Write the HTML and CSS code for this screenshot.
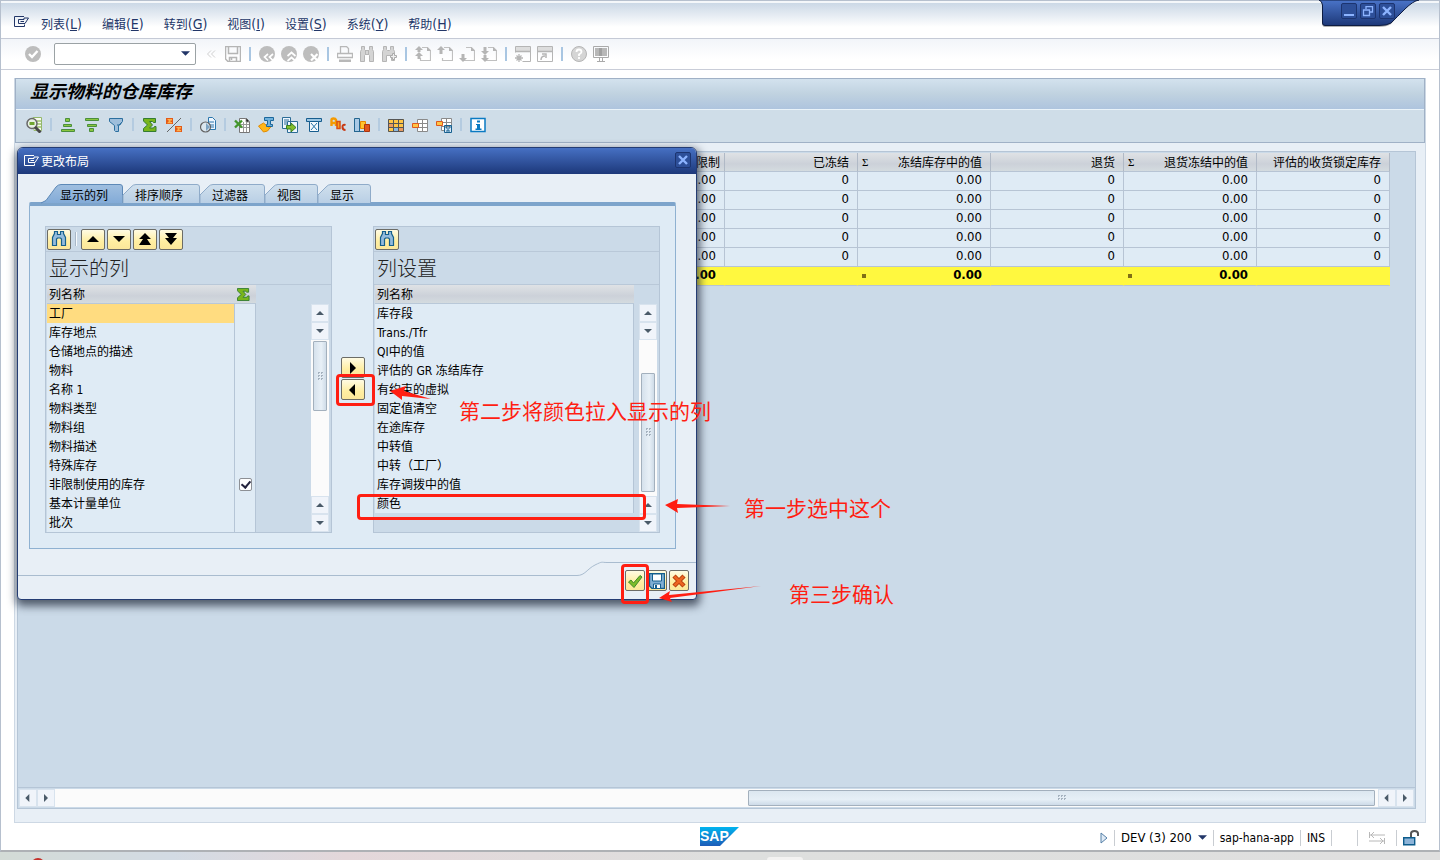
FILE: index.html
```html
<!DOCTYPE html>
<html lang="zh-CN">
<head>
<meta charset="utf-8">
<title>显示物料的仓库库存</title>
<link rel="stylesheet" href="styles.css">
</head>
<body>
<svg class="sprite" aria-hidden="true">
  <defs>
    <linearGradient id="g-blue" x1="0" y1="0" x2="0" y2="1"><stop offset="0" stop-color="#4a74c9"/><stop offset="1" stop-color="#1d3878"/></linearGradient>
    <linearGradient id="g-sap" x1="0" y1="0" x2="0" y2="1"><stop offset="0" stop-color="#00b4ef"/><stop offset="1" stop-color="#1d5cb8"/></linearGradient>
    <linearGradient id="g-tab" x1="0" y1="0" x2="0" y2="1"><stop offset="0" stop-color="#d0e0ed"/><stop offset="1" stop-color="#b9cfe5"/></linearGradient>
    <linearGradient id="g-tab-on" x1="0" y1="0" x2="0" y2="1"><stop offset="0" stop-color="#a0bfe0"/><stop offset="1" stop-color="#83abd7"/></linearGradient>
  </defs>
  <symbol id="i-exit" viewBox="0 0 16 14"><path d="M10 1.500H.5v10h10V9.500M4.500 4.500H10V3l4.500 0L11 8.500H4.500zM6.500 6.500H10" fill="none" stroke="currentColor" stroke-width="1"/></symbol>
  <symbol id="i-ok" viewBox="0 0 16 16"><circle cx="8" cy="8" r="8" fill="#bdbdbd"/><path d="M4 8l3 3 5.500-6" fill="none" stroke="#fff" stroke-width="2.400"/></symbol>
  <symbol id="i-back2" viewBox="0 0 16 16"><path d="M8 4.500L4.500 8 8 11.500M12 4.500L8.500 8l3.500 3.500" fill="none" stroke="#d0d0d0"/></symbol>
  <symbol id="i-save" viewBox="0 0 16 16"><path d="M.5.5h15v15H3L.5 13zM3.500.5v7h9v-7M4.500 15.500v-4h7v4M6.500 12v2" fill="none" stroke="#b5b5b5" stroke-width="1.500"/></symbol>
  <symbol id="i-back" viewBox="0 0 16 16"><circle cx="8" cy="8" r="8" fill="#bdbdbd"/><path d="M9 8l-3.500 3L9 14.500M14 8l-3.500 3 3.500 3.500" fill="none" stroke="#fff" stroke-width="1.700"/></symbol>
  <symbol id="i-up" viewBox="0 0 16 16"><circle cx="8" cy="8" r="8" fill="#bdbdbd"/><path d="M6.500 10l4-3.500 4 3.500M6.500 15l4-3.500 4 3.500" fill="none" stroke="#fff" stroke-width="1.700"/></symbol>
  <symbol id="i-cancel" viewBox="0 0 16 16"><circle cx="8" cy="8" r="8" fill="#bdbdbd"/><path d="M8 8l6.500 6.500M14.500 8L8 14.500" fill="none" stroke="#fff" stroke-width="2.200"/></symbol>
  <symbol id="i-print" viewBox="0 0 16 16"><path d="M3.500 7V.5h6l2 2V7M.5 7.500h15v4H.5z" fill="none" stroke="#b8b8b8" stroke-width="1.300"/><path d="M2 13.500h12v2.500H2z" fill="#b8b8b8"/></symbol>
  <symbol id="i-find" viewBox="0 0 16 16"><path d="M2.500 3.500v-3h3v3l1 1h3l1-1v-3h3v3l1 2v10h-4v-6l-1-1h-3l-1 1v6h-4v-10zM6.500 4v5M9.500 4v5" fill="#d4d4d4" stroke="#b5b5b5"/></symbol>
  <symbol id="i-findnext" viewBox="0 0 16 16"><path d="M2.500 3.500v-3h3v3l1 1h2l1-1v-3h3v3l1 2v9h-3v-5h-5v6h-4v-10z" fill="#d4d4d4" stroke="#b5b5b5"/><path d="M9.500 9.500h2v-2h2v2h2v2h-2v2h-2v-2h-2z" fill="#eee" stroke="#aaa"/></symbol>
  <symbol id="i-page" viewBox="0 0 16 16"><path d="M7 1.500h5.500l3 3v10H5.500V12" fill="none" stroke="#c0c0c0" stroke-width="1.200"/><path d="M12 1v4h4z" fill="#b5b5b5"/></symbol>
  <symbol id="i-first" viewBox="0 0 16 16"><use href="#i-page"/><path d="M4 0l4 4H5.500v2H8l-4 0-4 0h2.500V4H0zM4 6l4 4H5.500v3h-3v-3H0z" fill="#b5b5b5"/></symbol>
  <symbol id="i-prev" viewBox="0 0 16 16"><use href="#i-page"/><path d="M4 0l4 4H5.500v4h-3V4H0z" fill="#b5b5b5"/></symbol>
  <symbol id="i-next" viewBox="0 0 16 16"><use href="#i-page"/><path d="M4 16l4-4H5.500V8h-3v4H0z" fill="#b5b5b5"/></symbol>
  <symbol id="i-last" viewBox="0 0 16 16"><use href="#i-page"/><path d="M4 9l4-4H5.500V1h-3v4H0zM4 16l4-4H5.500V9h-3v3H0z" fill="#b5b5b5"/></symbol>
  <symbol id="i-newwin" viewBox="0 0 16 16"><path d="M.5 6.500v-6h15v15h-8" fill="none" stroke="#b5b5b5"/><path d="M1 1h14v4H1z" fill="#ddd"/><path d="M.5 5.500h15M4 8v8M0 12h8M1.500 9.500l5 5M6.500 9.500l-5 5" stroke="#b5b5b5" stroke-width="1.300"/></symbol>
  <symbol id="i-short" viewBox="0 0 16 16"><path d="M.5.5h15v15H.5z" fill="none" stroke="#b5b5b5"/><path d="M1 1h14v4H1z" fill="#ddd"/><path d="M.5 5.500h15M4 14q0-4 4-4M5 8h4v4" stroke="#b5b5b5" stroke-width="1.500" fill="none"/></symbol>
  <symbol id="i-help" viewBox="0 0 16 16"><circle cx="8" cy="8" r="7.500" fill="#d5d5d5" stroke="#b5b5b5"/><path d="M5.500 6q0-2.500 2.500-2.500T10.500 6Q10.500 7 8 8.500V10M8 11v2" fill="none" stroke="#fff" stroke-width="1.800"/></symbol>
  <symbol id="i-screen" viewBox="0 0 16 16"><path d="M.5.5h15v11H.5zM6.500 12v3M9.500 12v3M4 15.500h8" fill="none" stroke="#aaa"/><path d="M2 2h12v8H2z" fill="#b8b8b8"/><path d="M6 2h3v8H6z" fill="#a0a0a0"/></symbol>

  <symbol id="i-detail" viewBox="0 0 16 16"><path d="M7 .5h8.500v13H8z" fill="#f7faec" stroke="#94b86b"/><path d="M11 4h4M11 7h4M11 10h4" stroke="#6fa52f"/><circle cx="6" cy="6.500" r="5" fill="#e9f2e4" stroke="#686868" stroke-width="1.500"/><path d="M3.500 6.500h5" stroke="#6fa52f" stroke-width="3"/><path d="M9 10l5.500 5.500" stroke="#484848" stroke-width="3"/></symbol>
  <symbol id="i-asc" viewBox="0 0 16 16"><path d="M5.500 1.500h4v3h-4zM3.500 7.500h8v2h-8zM1.500 12.500h13v2h-13z" fill="#8bc63e" stroke="#4a8f3c"/></symbol>
  <symbol id="i-desc" viewBox="0 0 16 16"><path d="M1.500 1.500h13v2h-13zM3.500 7.500h9v2h-9zM5.500 11.500h4v3h-4z" fill="#8bc63e" stroke="#4a8f3c"/></symbol>
  <symbol id="i-filter" viewBox="0 0 16 16"><path d="M1.500 1.500h13v3l-4 4v6h-3l-1-1v-5l-5-4z" fill="#9ebedb" stroke="#2b6f9f"/><path d="M9 8h3l2-3" stroke="#2b6f9f" fill="none"/></symbol>
  <symbol id="i-sum" viewBox="0 0 14 14"><path d="M.5.5h12v4h-2l-1-1h-3l3 3.500-3 3h4l1-1.500h1.500v5H.5v-3L4.500 7 .5 3z" fill="#79b51c" stroke="#347d31"/></symbol>
  <symbol id="i-subsum" viewBox="0 0 16 16"><path d="M0 1h7v6H0zM9 9h7v6H9z" fill="#e35a18"/><path d="M1 2h5v1.500H4L5 4 4 5h2v1.200H1L3 4 1 2zM10 10h5v1.500h-2l1 .5-1 1h2v1.200h-5l2-2.200-2-2z" fill="#ffb04d"/><path d="M1 15L15 1" stroke="#666"/></symbol>
  <symbol id="i-preview" viewBox="0 0 16 16"><path d="M8.500 12.500h7v-9l-3-3h-4z" fill="#eef6ff" stroke="#2c77ad"/><path d="M9 5h5M9 8h5M9 10h5" stroke="#2c77ad"/><circle cx="5.500" cy="10" r="5" fill="#dbe7ef" stroke="#626262" stroke-width="1.200"/><path d="M6 6v8l4-4z" fill="#7ea4c3"/></symbol>
  <symbol id="i-excel" viewBox="0 0 16 16"><path d="M5.500 1.500h7l3 3v11h-10z" fill="#fff" stroke="#777"/><path d="M6 7.500h9M6 10.500h9M9.500 5v10M12.500 5v10M12 1v4h3" stroke="#999"/><path d="M1 3.500l7 7M8 3.500l-7 7" stroke="#43952c" stroke-width="2.400"/></symbol>
  <symbol id="i-word" viewBox="0 0 16 16"><path d="M.5 9l5-3 5 4 3-1-4 5-4 1z" fill="#ffb619" stroke="#e28b00"/><path d="M6.500.5h9v3h-3v4h2v2h-6v-2h1v-4h-3z" fill="#6fb1dc" stroke="#1b679b"/></symbol>
  <symbol id="i-export" viewBox="0 0 16 16"><path d="M.5.500h8v11h-8zM5.500 4.500h10v11h-10z" fill="#eef6ff" stroke="#2c6c96"/><path d="M2 3h5M2 5h3M2 7h3" stroke="#2c6c96"/><path d="M4.500 8.500H9V6l5 4.500L9 15v-3H4.500z" fill="#83bd2c" stroke="#397f22"/></symbol>
  <symbol id="i-mail" viewBox="0 0 16 16"><path d="M.5 1.500h15v3H.5z" fill="#9cc6e3" stroke="#175d8e"/><path d="M3.500 4.500h9v10h-9z" fill="#f4f9fd" stroke="#175d8e"/><path d="M5 6l6 7M11 6l-6 7" stroke="#2774a7"/></symbol>
  <symbol id="i-abc" viewBox="0 0 16 16"><path d="M1.500 9V3q0-1.500 2-1.500T6 3v6M2 6h4" fill="none" stroke="#f59a00" stroke-width="2.400"/><path d="M7 4.500h3v7H7z" fill="#f8a31c" stroke="#d94f12" stroke-width="1.500"/><path d="M15.500 8q-3-1-3 2t3 3" fill="none" stroke="#c83812" stroke-width="2"/></symbol>
  <symbol id="i-chart" viewBox="0 0 16 16"><path d="M.5 1.500h5v13h-5z" fill="#a9c9e5" stroke="#22658f"/><path d="M6.500 4.500h5v7h-5z" fill="#ffc42e" stroke="#e88800"/><path d="M10.500 7.500h5v7h-5z" fill="#e3551b" stroke="#a83410"/><path d="M0 14.500h10" stroke="#22658f"/></symbol>
  <symbol id="i-grid" viewBox="0 0 16 16"><path d="M0 2h16v13H0z" fill="#ffc545"/><path d="M1 6h4v4H1zM11 10h4v4h-4z" fill="#e99b62"/><path d="M6 10h4v4H6z" fill="#8bb9e0"/><path d="M.5 2.500h15v12H.5zM0 6.500h16M0 10.500h16M5.500 2v12M10.500 2v12" fill="none" stroke="#555"/></symbol>
  <symbol id="i-layout" viewBox="0 0 16 16"><path d="M5.500 2.500h10v12h-10zM5 6.500h11M5 10.500h11M10.500 2v13" fill="#fff" stroke="#8a8a8a"/><path d="M.5 6.500h6v4h-6z" fill="#ffc545" stroke="#df571d"/></symbol>
  <symbol id="i-laysave" viewBox="0 0 16 16"><path d="M5.500 1.500h10v12h-10zM5 5.500h11M5 9.500h11M10.500 1v13" fill="#fff" stroke="#8a8a8a"/><path d="M.5 4.500h6v4h-6z" fill="#ffc545" stroke="#df571d"/><path d="M8.500 8.500h7v7h-7zM10 8v3h4V8M11 15v-2h2v2" fill="#d5e8f8" stroke="#17608f"/></symbol>
  <symbol id="i-info" viewBox="0 0 16 16"><path d="M1 1.500h14v13H1z" fill="#fff" stroke="#0a7ac2" stroke-width="1.500"/><path d="M7 3.500h3v2H7zM6 7h4v4.500h1.500V13h-6v-1.500H7V8H6z" fill="#0a7ac2"/></symbol>

  <symbol id="i-findblue" viewBox="0 0 16 16"><path d="M3.500 2.500v-2h3v3h3v-3h3v2l2 4v8h-4V8l-1-1h-3l-1 1v6.500h-4v-8z" fill="#93bbdd" stroke="#155f8c" stroke-width="1.200"/></symbol>
  <symbol id="i-tri-up" viewBox="0 0 12 12"><path d="M0 9L6 3l6 6z" fill="currentColor"/></symbol>
  <symbol id="i-tri-down" viewBox="0 0 12 12"><path d="M0 3l6 6 6-6z" fill="currentColor"/></symbol>
  <symbol id="i-tri-left" viewBox="0 0 12 12"><path d="M8 0v12L2 6z" fill="currentColor"/></symbol>
  <symbol id="i-tri-right" viewBox="0 0 12 12"><path d="M3 0v12l6-6z" fill="currentColor"/></symbol>
  <symbol id="i-top" viewBox="0 0 12 12"><path d="M0 6l6-6 6 6H8v0l4 6H0l4-6z" fill="currentColor"/></symbol>
  <symbol id="i-bottom" viewBox="0 0 12 12"><path d="M0 0h12L8 5h4l-6 7-6-7h4z" fill="currentColor"/></symbol>
  <symbol id="i-check" viewBox="0 0 16 16"><path d="M1.500 9l2.500-2 2.500 3L13 2.500l2 1.500-8 10.500z" fill="#7dbb2a" stroke="#3d8b2c"/></symbol>
  <symbol id="i-saveblue" viewBox="0 0 16 16"><path d="M.5.5h15v15H3L.5 13z" fill="#7faed3" stroke="#155f8c" stroke-width="1.300"/><path d="M3.500 1h9v7h-9zM4.500 11h7v4.500h-7z" fill="#fff" stroke="#155f8c"/><path d="M6 12h2v3H6z" fill="#155f8c"/></symbol>
  <symbol id="i-cross" viewBox="0 0 16 16"><path d="M3 3l10 10M13 3L3 13" stroke="#b33a0c" stroke-width="4.500"/><path d="M3.500 3.500l9 9M12.500 3.500l-9 9" stroke="#ec6420" stroke-width="2.500"/></symbol>
  <symbol id="i-x" viewBox="0 0 10 10"><path d="M1 1l8 8M9 1L1 9" stroke="#8db4ff" stroke-width="2.400"/></symbol>
</svg>

<div class="app">
  <nav class="menubar" aria-label="菜单">
    <svg class="menu-icon"><use href="#i-exit"/></svg>
    <button class="menu">列表<span>(<u>L</u>)</span></button>
    <button class="menu">编辑<span>(<u>E</u>)</span></button>
    <button class="menu">转到<span>(<u>G</u>)</span></button>
    <button class="menu">视图<span>(<u>I</u>)</span></button>
    <button class="menu">设置<span>(<u>S</u>)</span></button>
    <button class="menu">系统<span>(<u>Y</u>)</span></button>
    <button class="menu">帮助<span>(<u>H</u>)</span></button>
  </nav>

  <div class="window-controls">
    <svg class="window-shape" viewBox="0 0 102 30"><path d="M0 0h100Q94 1 86 9T72 24Q68 27 60 27H6Q3 27 3 23V5Q3 1 0 0z" fill="#000" opacity=".3"/><path d="M0 0h100Q94 1 86 9T72 23Q68 25.500 60 25.500H6Q3.500 25.500 3.500 23V5Q3 1 0 0z" fill="url(#g-blue)" stroke="#0d1c42"/></svg>
    <button class="wbtn" aria-label="最小化"><svg viewBox="0 0 10 10"><path d="M0 9h10" stroke="#8db4ff" stroke-width="2"/></svg></button>
    <button class="wbtn" aria-label="还原"><svg viewBox="0 0 10 10"><path d="M3 3V.7h6.500V6H7M.5 4h6v5.500h-6z" fill="none" stroke="#8db4ff" stroke-width="1.300"/></svg></button>
    <button class="wbtn" aria-label="关闭"><svg viewBox="0 0 10 10"><use href="#i-x"/></svg></button>
  </div>

  <div class="toolbar">
    <button class="ico" aria-label="回车"><svg><use href="#i-ok"/></svg></button>
    <div class="combo"><select aria-label="命令"><option></option></select><svg><use href="#i-tri-down"/></svg></div>
    <button class="ico" aria-label="收起"><svg><use href="#i-back2"/></svg></button>
    <button class="ico" aria-label="保存"><svg><use href="#i-save"/></svg></button>
    <i class="sep"></i>
    <button class="ico" aria-label="返回"><svg><use href="#i-back"/></svg></button>
    <button class="ico" aria-label="退出"><svg><use href="#i-up"/></svg></button>
    <button class="ico" aria-label="取消"><svg><use href="#i-cancel"/></svg></button>
    <i class="sep"></i>
    <button class="ico" aria-label="打印"><svg><use href="#i-print"/></svg></button>
    <button class="ico" aria-label="查找"><svg><use href="#i-find"/></svg></button>
    <button class="ico" aria-label="查找下一个"><svg><use href="#i-findnext"/></svg></button>
    <i class="sep"></i>
    <button class="ico" aria-label="首页"><svg><use href="#i-first"/></svg></button>
    <button class="ico" aria-label="上一页"><svg><use href="#i-prev"/></svg></button>
    <button class="ico" aria-label="下一页"><svg><use href="#i-next"/></svg></button>
    <button class="ico" aria-label="末页"><svg><use href="#i-last"/></svg></button>
    <i class="sep"></i>
    <button class="ico" aria-label="新窗口"><svg><use href="#i-newwin"/></svg></button>
    <button class="ico" aria-label="快捷方式"><svg><use href="#i-short"/></svg></button>
    <i class="sep"></i>
    <button class="ico" aria-label="帮助"><svg><use href="#i-help"/></svg></button>
    <button class="ico" aria-label="自定义布局"><svg><use href="#i-screen"/></svg></button>
  </div>

  <main class="workspace">
    <header class="screen-head">
      <h1>显示物料的仓库库存</h1>
      <div class="apptools">
        <button class="ico" aria-label="明细"><svg><use href="#i-detail"/></svg></button>
        <i class="sep"></i>
        <button class="ico" aria-label="升序"><svg><use href="#i-asc"/></svg></button>
        <button class="ico" aria-label="降序"><svg><use href="#i-desc"/></svg></button>
        <button class="ico" aria-label="过滤"><svg><use href="#i-filter"/></svg></button>
        <i class="sep"></i>
        <button class="ico" aria-label="总计"><svg class="sm"><use href="#i-sum"/></svg></button>
        <button class="ico" aria-label="小计"><svg><use href="#i-subsum"/></svg></button>
        <i class="sep"></i>
        <button class="ico" aria-label="打印预览"><svg><use href="#i-preview"/></svg></button>
        <i class="sep"></i>
        <button class="ico" aria-label="电子表格"><svg><use href="#i-excel"/></svg></button>
        <button class="ico" aria-label="字处理"><svg><use href="#i-word"/></svg></button>
        <button class="ico" aria-label="本地文件"><svg><use href="#i-export"/></svg></button>
        <button class="ico" aria-label="邮件"><svg><use href="#i-mail"/></svg></button>
        <button class="ico" aria-label="ABC 分析"><svg><use href="#i-abc"/></svg></button>
        <button class="ico" aria-label="图形"><svg><use href="#i-chart"/></svg></button>
        <i class="sep"></i>
        <button class="ico" aria-label="更改布局"><svg><use href="#i-grid"/></svg></button>
        <button class="ico" aria-label="选择布局"><svg><use href="#i-layout"/></svg></button>
        <button class="ico" aria-label="保存布局"><svg><use href="#i-laysave"/></svg></button>
        <i class="sep"></i>
        <button class="ico" aria-label="信息"><svg><use href="#i-info"/></svg></button>
      </div>
    </header>

    <section class="grid-area">
      <div class="grid-box">
        <div class="grid-scroll">
          <table class="stock">
            <colgroup><col><col class="c"><col class="c"><col class="c"><col class="c"><col class="c"><col class="c"></colgroup>
            <thead><tr><th></th><th class="cut">限制</th><th>已冻结</th><th><span class="sg">Σ</span>冻结库存中的值</th><th>退货</th><th><span class="sg">Σ</span>退货冻结中的值</th><th>评估的收货锁定库存</th></tr></thead>
            <tbody>
              <tr><td></td><td>0.00</td><td>0</td><td>0.00</td><td>0</td><td>0.00</td><td>0</td></tr>
              <tr><td></td><td>0.00</td><td>0</td><td>0.00</td><td>0</td><td>0.00</td><td>0</td></tr>
              <tr><td></td><td>0.00</td><td>0</td><td>0.00</td><td>0</td><td>0.00</td><td>0</td></tr>
              <tr><td></td><td>0.00</td><td>0</td><td>0.00</td><td>0</td><td>0.00</td><td>0</td></tr>
              <tr><td></td><td>0.00</td><td>0</td><td>0.00</td><td>0</td><td>0.00</td><td>0</td></tr>
            </tbody>
            <tfoot><tr><td></td><td>0.00</td><td></td><td><i class="dot"></i>0.00</td><td></td><td><i class="dot"></i>0.00</td><td></td></tr></tfoot>
          </table>
        </div>
        <div class="hscroll">
          <button class="sb" aria-label="最左"><svg><use href="#i-tri-left"/></svg></button>
          <button class="sb" aria-label="向右"><svg><use href="#i-tri-right"/></svg></button>
          <div class="htrack"><div class="hthumb"><i class="grip wide"></i></div></div>
          <button class="sb" aria-label="向左"><svg><use href="#i-tri-left"/></svg></button>
          <button class="sb" aria-label="最右"><svg><use href="#i-tri-right"/></svg></button>
        </div>
      </div>
    </section>
  </main>

  <footer class="statusbar">
    <svg class="logo" viewBox="0 0 39 19" role="img" aria-label="SAP"><path d="M0 0h39L20 19H0z" fill="url(#g-sap)"/><text x="0" y="14" class="logo-text">SAP</text></svg>
    <div class="status">
      <svg class="play" viewBox="0 0 8 12"><path d="M1 1v10l6-5z" fill="#dfeaf5" stroke="#5580a8"/></svg>
      <i class="bar"></i><span class="sys">DEV (3) 200</span><svg class="drop"><use href="#i-tri-down"/></svg>
      <i class="bar"></i><span>sap-hana-app</span>
      <i class="bar"></i><span>INS</span>
      <i class="bar"></i><i class="bar gap"></i>
      <svg class="sico link" viewBox="0 0 16 16"><path d="M.5 2v6M1 5h15M5 2L2 5l3 3M15.500 8v6M0 11h15M11 8l3 3-3 3" fill="none" stroke="#b8b8b8"/></svg>
      <i class="bar"></i>
      <svg class="sico" viewBox="0 0 16 16"><path d="M8 7V3.500Q8 1 11.500 1T15 3.500V6" fill="none" stroke="#555" stroke-width="2"/><path d="M.7 7.700h11v7H.7z" fill="#8db4d8" stroke="#0d5c8c" stroke-width="1.400"/></svg>
    </div>
  </footer>
</div>
<div class="taskbar"><i class="red-dot"></i><i class="task"></i></div>

<section class="dialog" role="dialog" aria-label="更改布局">
  <header class="dlg-title"><svg class="menu-icon"><use href="#i-exit"/></svg><h2>更改布局</h2><button class="wbtn" aria-label="关闭"><svg viewBox="0 0 10 10"><use href="#i-x"/></svg></button></header>
  <div class="tabs" role="tablist">
    <button class="tab first" role="tab" aria-selected="true"><svg viewBox="0 0 82 19"><path d="M0 19L5 16.500 15 3Q17 .5 20 .5H79Q81.500.5 81.500 3V19" fill="url(#g-tab-on)" stroke="#5d89b7"/></svg><span>显示的列</span></button>
    <button class="tab wide" role="tab"><svg viewBox="0 0 77 19"><path d="M0 19V11L8 3Q10 .5 13 .5H74Q76.500.5 76.500 3V19" fill="url(#g-tab)" stroke="#8fabc9"/></svg><span>排序顺序</span></button>
    <button class="tab" role="tab"><svg viewBox="0 0 65 19"><path d="M0 19V11L8 3Q10 .5 13 .5H62Q64.500.5 64.500 3V19" fill="url(#g-tab)" stroke="#8fabc9"/></svg><span>过滤器</span></button>
    <button class="tab" role="tab"><svg viewBox="0 0 53 19"><path d="M0 19V11L8 3Q10 .5 13 .5H50Q52.500.5 52.500 3V19" fill="url(#g-tab)" stroke="#8fabc9"/></svg><span>视图</span></button>
    <button class="tab" role="tab"><svg viewBox="0 0 53 19"><path d="M0 19V11L8 3Q10 .5 13 .5H50Q52.500.5 52.500 3V19" fill="url(#g-tab)" stroke="#8fabc9"/></svg><span>显示</span></button>
  </div>
  <div class="tabpanel">
    <section class="listbox">
      <div class="list-tools">
        <button class="ybtn" aria-label="查找"><svg class="lg"><use href="#i-findblue"/></svg></button>
        <i class="sep"></i>
        <button class="ybtn" aria-label="上移"><svg><use href="#i-tri-up"/></svg></button>
        <button class="ybtn" aria-label="下移"><svg><use href="#i-tri-down"/></svg></button>
        <button class="ybtn" aria-label="移至顶部"><svg><use href="#i-top"/></svg></button>
        <button class="ybtn" aria-label="移至底部"><svg><use href="#i-bottom"/></svg></button>
      </div>
      <h3>显示的列</h3>
      <div class="list-body">
        <table class="list shown">
          <colgroup><col><col class="flag"></colgroup>
          <thead><tr><th>列名称</th><th class="flag"><svg class="sum"><use href="#i-sum"/></svg></th></tr></thead>
          <tbody>
            <tr class="selected"><td>工厂</td><td></td></tr>
            <tr><td>库存地点</td><td></td></tr>
            <tr><td>仓储地点的描述</td><td></td></tr>
            <tr><td>物料</td><td></td></tr>
            <tr><td>名称 1</td><td></td></tr>
            <tr><td>物料类型</td><td></td></tr>
            <tr><td>物料组</td><td></td></tr>
            <tr><td>物料描述</td><td></td></tr>
            <tr><td>特殊库存</td><td></td></tr>
            <tr><td>非限制使用的库存</td><td><input type="checkbox" checked aria-label="非限制使用的库存 总计"></td></tr>
            <tr><td>基本计量单位</td><td></td></tr>
            <tr><td>批次</td><td></td></tr>
          </tbody>
        </table>
        <div class="vscroll">
          <button class="sb" aria-label="向上"><svg><use href="#i-tri-up"/></svg></button>
          <button class="sb" aria-label="向下"><svg><use href="#i-tri-down"/></svg></button>
          <div class="vtrack"><div class="vthumb a"><i class="grip"></i></div></div>
          <button class="sb" aria-label="上一页"><svg><use href="#i-tri-up"/></svg></button>
          <button class="sb" aria-label="下一页"><svg><use href="#i-tri-down"/></svg></button>
        </div>
      </div>
    </section>
    <div class="movers">
      <button class="ybtn" aria-label="隐藏所选字段"><svg><use href="#i-tri-right"/></svg></button>
      <button class="ybtn" aria-label="显示所选字段"><svg><use href="#i-tri-left"/></svg></button>
    </div>
    <section class="listbox">
      <div class="list-tools"><button class="ybtn" aria-label="查找"><svg class="lg"><use href="#i-findblue"/></svg></button></div>
      <h3>列设置</h3>
      <div class="list-body">
        <table class="list avail">
          <thead><tr><th>列名称</th></tr></thead>
          <tbody>
            <tr><td>库存段</td></tr>
            <tr><td>Trans./Tfr</td></tr>
            <tr><td>QI中的值</td></tr>
            <tr><td>评估的 GR 冻结库存</td></tr>
            <tr><td>有约束的虚拟</td></tr>
            <tr><td>固定值清空</td></tr>
            <tr><td>在途库存</td></tr>
            <tr><td>中转值</td></tr>
            <tr><td>中转（工厂）</td></tr>
            <tr><td>库存调拨中的值</td></tr>
            <tr><td>颜色</td></tr>
          </tbody>
        </table>
        <div class="vscroll">
          <button class="sb" aria-label="向上"><svg><use href="#i-tri-up"/></svg></button>
          <button class="sb" aria-label="向下"><svg><use href="#i-tri-down"/></svg></button>
          <div class="vtrack"><div class="vthumb b"><i class="grip"></i></div></div>
          <button class="sb" aria-label="上一页"><svg><use href="#i-tri-up"/></svg></button>
          <button class="sb" aria-label="下一页"><svg><use href="#i-tri-down"/></svg></button>
        </div>
      </div>
    </section>
  </div>
  <footer class="dlg-foot">
    <i class="rule"></i>
    <svg class="curve" viewBox="0 0 30 28"><path d="M0 26.500C8 26.500 10 20 18 16S24 13.500 30 13.500" fill="none" stroke="#a9bccf"/></svg>
    <div class="actions">
      <button class="ybtn sq" aria-label="确认"><svg class="lg"><use href="#i-check"/></svg></button>
      <button class="ybtn sq" aria-label="保存"><svg class="lg"><use href="#i-saveblue"/></svg></button>
      <button class="ybtn sq" aria-label="取消"><svg class="lg"><use href="#i-cross"/></svg></button>
    </div>
  </footer>
</section>

<div class="mark m1"></div>
<div class="mark m2"></div>
<div class="mark m3"></div>
<svg class="arrows" viewBox="330 370 440 240"><path d="M390 391l16-5-2 5 27 8-29-3 0 4zM665 505l13-6-1 5 53 2-53 2 1 5zM659 598l11-7-1 4 92-9-91 12 2 4z" fill="#ff1e12"/></svg>
<p class="note n1">第二步将颜色拉入显示的列</p>
<p class="note n2">第一步选中这个</p>
<p class="note n3">第三步确认</p>
</body>
</html>
```
FILE: styles.css
```css
* { box-sizing: border-box; }
body {
  margin: 0;
  min-height: 100vh;
  display: flex;
  flex-direction: column;
  position: relative;
  font-family: "DejaVu Sans Condensed", "Noto Sans CJK SC", sans-serif;
  font-size: 12px;
  line-height: 18px;
  color: #000;
  background: #dfe0e0;
}
button {
  margin: 0;
  padding: 0;
  border: 0;
  background: none;
  font: inherit;
  color: inherit;
}
h1, h2, h3, p { margin: 0; font-weight: 400; }
svg { display: block; overflow: visible; }
.sprite { position: absolute; width: 0; height: 0; }

.app {
  flex: 1;
  display: flex;
  flex-direction: column;
  background: #fff;
  border: 1px solid #b6c0ce;
  border-bottom: 2px solid #aeb1b5;
}

/* menu bar */
.menubar {
  display: flex;
  gap: 20px;
  height: 38px;
  padding: 12px 13px 0;
  border-top: 2px solid #f4f7fa;
  border-bottom: 1px solid #c5cad6;
  background: linear-gradient(#cbd8e6, #fff 24px);
  color: #223668;
}
.menu { height: 18px; white-space: nowrap; }
.menu span { font-size: 14px; }
.menu-icon { width: 16px; height: 14px; flex: none; }
.menubar .menu-icon { margin-right: -9px; }

.window-controls {
  position: absolute;
  top: 0;
  right: 20px;
  width: 101px;
  display: flex;
  gap: 3px;
  padding: 3px 0 0 22px;
}
.window-shape { position: absolute; left: 0; top: 0; width: 102px; height: 30px; }
.wbtn {
  position: relative;
  width: 16px;
  height: 16px;
  border: 1px solid #1c3470;
  border-radius: 2px;
  background: #2d4f99;
  display: grid;
  place-items: center;
}
.wbtn svg { width: 10px; height: 10px; }

/* toolbars */
.toolbar {
  display: flex;
  align-items: center;
  gap: 6px;
  height: 31px;
  padding: 0 0 1px 24px;
  border-bottom: 1px solid #c9cdd8;
  background: linear-gradient(#f2f5f9, #fff 20px);
}
.ico { width: 16px; height: 16px; flex: none; }
.ico svg { width: 16px; height: 16px; }
.ico svg.sm { width: 14px; height: 14px; margin: 0 1px; }
.sep { width: 2px; height: 14px; background: #a9c6e2; flex: none; }
.toolbar .sep { margin: 0 2px; }
.combo {
  position: relative;
  width: 142px;
  height: 22px;
  margin: 0 1px 0 7px;
}
.combo select {
  width: 100%;
  height: 100%;
  appearance: none;
  border: 1px solid #9ba2a5;
  border-radius: 2px;
  background: #fff;
}
.combo svg { position: absolute; right: 6px; top: 6px; width: 9px; height: 9px; color: #223668; }

.workspace {
  flex: 1;
  display: flex;
  flex-direction: column;
  margin: 8px 13px 0;
  border: 1px solid #cdd8e4;
  border-top: 0;
  background: #e8eff6;
}
.screen-head { border: 1px solid #a0b1c6; background: #cfdde8; }
.screen-head h1 {
  height: 31px;
  padding: 1px 14px;
  border-bottom: 1px solid #eaf3f9;
  font-size: 18px;
  line-height: 24px;
  font-weight: 700;
  font-style: italic;
  background: linear-gradient(#d3e2ee, #c0d2e0 50%, #aec4de);
}
.apptools { display: flex; align-items: center; gap: 8px; height: 32px; padding: 0 0 3px 10px; }
.apptools .sep { height: 13px; background: #b4cbe0; }

.grid-area { flex: 1; display: flex; padding: 8px 9px 13px 2px; }
.grid-box {
  flex: 1;
  display: flex;
  flex-direction: column;
  border: 1px solid #b5c5d6;
  background: #cbdae8;
}
.grid-scroll { flex: 1; padding-right: 25px; padding-top: 1px; overflow: hidden; }
.stock { width: 100%; table-layout: fixed; border-collapse: separate; border-spacing: 0; font-size: 12px; }
.stock .c { width: 133px; }
.stock th, .stock td { height: 19px; padding: 0 8px 0 4px; text-align: right; white-space: nowrap; }
.stock th {
  padding-top: 3px;
  line-height: 15px;
  font-weight: 400;
  background: linear-gradient(#dfe2e5, #ccd1d9 60%, #d4dbdf);
  border-bottom: 1px solid #b7c4d4;
  border-right: 1px solid #b0b9c6;
}
.stock th.cut { padding-right: 4px; }
.stock td { padding-bottom: 3px; font-size: 13px; line-height: 15px; background: #dfebf5; border: solid #b7c4d4; border-width: 0 1px 1px 0; }
.stock tfoot td { font-weight: 700; background: #fff83f; border-right-color: #fff83f; }
.sg { float: left; font: 11px/13px "Liberation Serif", serif; }
.dot { float: left; width: 4px; height: 4px; margin: 7px 0 0; background: #806f16; }

/* scroll bars */
.hscroll { display: flex; height: 21px; padding: 1px; border-top: 1px solid #b5c5d6; }
.sb {
  width: 18px;
  height: 18px;
  flex: none;
  display: grid;
  place-items: center;
  color: #4a5a68;
  background: #f0f4fa;
  border: 1px solid #d8e3ee;
}
.sb svg { width: 8px; height: 8px; }
.htrack { flex: 1; display: flex; justify-content: flex-end; padding: 1px 3px 1px 0; background: #fbfbfb; }
.hthumb, .vthumb {
  display: grid;
  place-items: center;
  border: 1px solid #a3b0bd;
  border-radius: 1px;
}
.hthumb { width: 47.500%; background: linear-gradient(#dce7f0, #e6eff6 60%, #cddbe8); }
.grip { width: 6px; height: 9px; background: conic-gradient(#a5b2bf 25%, transparent 0) 0 0 / 3px 3px; }
.grip.wide { width: 9px; height: 6px; }
.vscroll { width: 18px; margin: 19px 1px 0 0; display: flex; flex-direction: column; }
.vtrack { flex: 1; background: #fbfbfb; display: flex; flex-direction: column; padding: 0 2px; }
.vthumb { width: 14px; background: linear-gradient(90deg, #d5e1ec, #e8f0f7 60%, #cfdce8); }
.vthumb.a { margin-top: 1px; height: 70px; }
.vthumb.b { margin-top: 33px; height: 119px; }

/* status bar */
.statusbar { position: relative; display: flex; align-items: center; height: 27px; padding: 2px 20px 0; }
.logo { position: absolute; left: 50%; top: 4px; width: 39px; height: 19px; margin-left: -20px; }
.logo-text { font: 700 14px "Liberation Sans", sans-serif; fill: #fff; }
.status { margin-left: auto; display: flex; align-items: center; gap: 6px; }
.bar { width: 1px; height: 16px; background: #c9cdd2; }
.bar.gap { margin-left: 19px; margin-right: 5px; }
.play { width: 8px; height: 12px; }
.drop { width: 9px; height: 9px; color: #223668; }
.sico { width: 16px; height: 16px; }
.sico.link { margin-right: 5px; }
.sys { font-size: 13px; }
.taskbar {
  height: 8px;
  overflow: hidden;
  display: flex;
  background: linear-gradient(90deg, #d3dbd6, #d3dbe4 12%, #e4d7da 24%, #dedfde 50%, #dfdfdf);
}
.red-dot { width: 14px; height: 14px; margin: 6px 0 0 31px; border-radius: 50%; background: #c4302a; }
.task { width: 36px; height: 10px; margin: 5px 0 0 722px; border-radius: 3px; background: #f3f2f1; }

/* layout dialog */
.dialog {
  position: absolute;
  left: 17px;
  top: 147px;
  width: 680px;
  border: 1px solid #243c73;
  border-radius: 6px 6px 4px 4px;
  background: #e8eff6;
  box-shadow: 1px 4px 9px 2px rgba(40, 50, 65, .75);
}
.dlg-title {
  display: flex;
  align-items: center;
  gap: 1px;
  height: 26px;
  padding: 0 5px 0 6px;
  border-radius: 5px 5px 0 0;
  background: linear-gradient(#4670c3, #1d387a);
  color: #fff;
}
.dlg-title h2 { flex: 1; padding-top: 2px; font-size: 12px; }
.dlg-title .wbtn { margin-bottom: 2px; }
.tabs { display: flex; padding: 10px 0 0 23px; }
.tab { position: relative; height: 19px; padding: 3px 17px 0 12px; text-align: left; }
.tab.wide { padding-right: 17px; }
.tab.first { padding: 3px 15px 0 19px; }
.tab svg { position: absolute; inset: 0; width: 100%; height: 19px; }
.tab span { position: relative; display: block; line-height: 18px; }
.tabpanel {
  display: grid;
  grid-template-columns: 1fr 41px 1fr;
  margin: -1px 20px 0 11px;
  padding: 20px 15px 15px;
  border: 1px solid #8fb1d1;
  border-top: 4px solid #7da4cb;
  border-radius: 2px 2px 0 0;
  background: #dfebf5;
}
.listbox { border: 1px solid #b5c5d6; background: #cbdae8; }
.list-tools { display: flex; align-items: center; gap: 2px; height: 25px; padding-left: 1px; border-bottom: 1px solid #b9c8d8; }
.list-tools .sep { margin: 0 2px; background: linear-gradient(90deg, #a9b8c8 50%, #f6fafd 50%); }
.ybtn {
  width: 24px;
  height: 21px;
  display: grid;
  place-items: center;
  border: 1px solid #6c6c66;
  border-radius: 2px;
  background: linear-gradient(#fffbe3, #ffeea1 60%, #fbe79a);
}
.ybtn svg { width: 12px; height: 12px; }
.ybtn svg.lg { width: 16px; height: 16px; }
.ybtn.sq { width: 20px; }
.listbox h3 { height: 33px; padding: 2px 0 0 3px; border-bottom: 1px solid #b9c8d8; font-size: 20px; line-height: 30px; font-weight: 300; color: #222; }
.list-body { display: flex; justify-content: space-between; padding: 0 1px; height: 247px; }
.list { table-layout: fixed; border-collapse: separate; border-spacing: 0; align-self: flex-start; }
.list.shown { width: 209px; }
.list.avail { width: 259px; }
.list .flag { width: 21px; }
.list th, .list td { height: 19px; padding: 0 0 0 2px; line-height: 18px; text-align: left; font-weight: 400; white-space: nowrap; }
.list th { padding-top: 3px; line-height: 15px; background: linear-gradient(#dfe2e5, #ccd1d9 60%, #d4dbdf); border-bottom: 1px solid #b9c8d8; }
.list th.flag { padding-top: 0; }
.list td { background: #dfebf5; border-right: 1px solid #b5c5d6; }
.list .selected td:first-child { background: #ffdc80; }
.sum { width: 13px; height: 13px; }
.list input {
  appearance: none;
  display: block;
  width: 13px;
  height: 13px;
  margin: 0 0 0 2px;
  border: 1px solid #8d9095;
  border-radius: 2px;
  background: #fff;
}
.list input:checked::before {
  content: "";
  display: block;
  width: 4px;
  height: 7px;
  margin: 0 0 0 3px;
  border: solid #24243e;
  border-width: 0 2px 2px 0;
  transform: rotate(40deg);
}
.movers { display: flex; flex-direction: column; gap: 1px; padding: 131px 0 0 9px; }

.dlg-foot { display: flex; height: 50px; }
.rule { flex: 1; height: 27px; border-bottom: 1px solid #a9bccf; }
.curve { width: 30px; height: 28px; }
.actions { width: 89px; margin-top: 13px; padding: 7px 0 0 18px; display: flex; gap: 2px; border-top: 1px solid #a9bccf; }

/* step annotations */
.mark { position: absolute; border: 3px solid #ff1e12; border-radius: 4px; }
.m1 { left: 336px; top: 374px; width: 39px; height: 32px; }
.m2 { left: 357px; top: 494px; width: 289px; height: 26px; }
.m3 { left: 621px; top: 564px; width: 28px; height: 40px; }
.arrows { position: absolute; left: 330px; top: 370px; width: 440px; height: 240px; }
.note { position: absolute; font-size: 21px; line-height: 30px; color: #ff1e12; white-space: nowrap; }
.n1 { left: 459px; top: 397px; }
.n2 { left: 744px; top: 494px; }
.n3 { left: 789px; top: 580px; }
```
